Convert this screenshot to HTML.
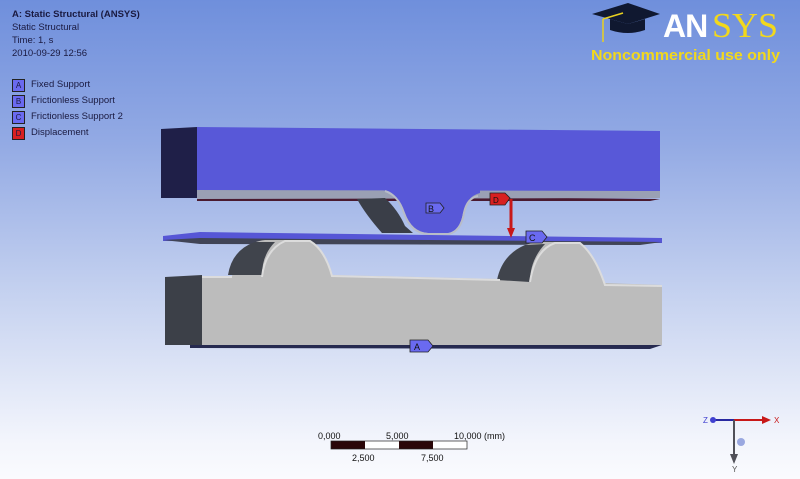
<!DOCTYPE html>
<html><head><meta charset="utf-8"><style>
html,body{margin:0;padding:0}
body{width:800px;height:479px;overflow:hidden;position:relative;font-family:"Liberation Sans",sans-serif;
background:linear-gradient(180deg,#6f8fdc 0%,#93aae4 30%,#c3d0ef 60%,#f3f5fc 92%,#fafbfe 100%);}
.t{position:absolute;left:12px;font-size:9.5px;color:#1a1a40;}
.lg{position:absolute;left:12px;font-size:9.5px;color:#1a1a40;height:12px;line-height:12px}
.lg b{display:inline-block;width:11px;height:11px;border:1px solid #222;font-size:8px;text-align:center;line-height:11px;margin-right:6px;vertical-align:top;font-weight:normal}
</style></head><body>
<div class="t" style="top:9px;font-weight:bold">A: Static Structural (ANSYS)</div>
<div class="t" style="top:22px">Static Structural</div>
<div class="t" style="top:35px">Time: 1, s</div>
<div class="t" style="top:48px">2010-09-29 12:56</div>
<div class="lg" style="top:79px"><b style="background:#6a6af0">A</b>Fixed Support</div>
<div class="lg" style="top:95px"><b style="background:#6a6af0">B</b>Frictionless Support</div>
<div class="lg" style="top:111px"><b style="background:#6a6af0">C</b>Frictionless Support 2</div>
<div class="lg" style="top:127px"><b style="background:#d82020">D</b>Displacement</div>

<svg width="800" height="479" style="position:absolute;left:0;top:0" xmlns="http://www.w3.org/2000/svg">
<!-- logo -->
<path d="M592 14 L628 3 L660 14 L628 24 Z" fill="#101830"/>
<path d="M610 19 L610 30 Q628 36 645 30 L645 19 L628 24 Z" fill="#101830"/>
<line x1="603" y1="19" x2="623" y2="13" stroke="#e8d020" stroke-width="1.5"/>
<line x1="603" y1="19" x2="603" y2="42" stroke="#e8d020" stroke-width="1.5"/>
<text x="663" y="37" font-family="Liberation Sans" font-weight="bold" font-size="32" fill="#fff" letter-spacing="-1">AN</text>
<text x="712" y="37" font-family="Liberation Serif" font-size="35" fill="#f2d81c" textLength="66" lengthAdjust="spacingAndGlyphs">SYS</text>
<text x="591" y="60" font-family="Liberation Sans" font-weight="bold" font-size="15" fill="#f2d81c" textLength="189" lengthAdjust="spacingAndGlyphs">Noncommercial use only</text>

<!-- upper block -->
<path d="M161 129 L197 127 L197 198 L161 198 Z" fill="#1f1f48"/>
<path d="M197 198 L380 196 L470 197 L660 199 L650 201 L197 201 Z" fill="#4a1a30"/>
<path d="M197 188 L660 190 L660 198 L197 199 Z" fill="#9aa0b4"/>
<path d="M197 127 L660 131 L660 191 L197 190 Z" fill="#5858d8"/>
<path d="M357 199 L385 198 Q398 210 405 226 L413 233 L382 233 Q366 215 357 199 Z" fill="#3a3e48"/>
<path d="M383 190 Q397 193 403 212 Q410 232 428 233 L448 233 Q460 231 463 213 Q467 196 480 193 L480 189 L383 189 Z" fill="#5858d8"/>
<path d="M385 191 Q398 195 404 213 Q411 233 428 234 L449 234 Q461 231 464 213 Q467 198 478 196" stroke="#b8bcc8" stroke-width="2" fill="none"/>
<!-- plate -->
<path d="M163 236 L200 232 L662 238 L662 243 L163 241 Z" fill="#5656d6"/>
<path d="M163 240 L200 238 L662 242 L640 245 L200 244 Z" fill="#404456"/>
<!-- lower block -->
<path d="M165 277 L202 275 L202 345 L165 345 Z" fill="#3c4048"/>
<path d="M202 276 L232 276 L235 262 Q245 242 265 240 L310 240 Q325 250 332 275 L500 279 L505 262 Q515 244 540 242 L580 242 Q595 255 605 283 L662 285 L662 345 L202 345 Z" fill="#bcbcbc"/>
<path d="M228 275 Q232 250 255 242 L275 242 Q262 255 262 275 Z" fill="#40444c"/>
<path d="M497 280 Q502 255 525 245 L545 244 Q530 260 530 282 Z" fill="#40444c"/>
<path d="M202 277 L232 277 M262 277 Q265 250 285 241 L310 241 Q325 250 332 276 L500 280 M530 282 Q535 250 555 243 L580 243 Q595 255 605 285 L662 286" stroke="#dcdcdc" stroke-width="2" fill="none"/>
<path d="M190 345 L662 345 L650 349 L190 348 Z" fill="#262a50"/>
<!-- labels -->
<path d="M410 340 L428 340 L433 346 L428 352 L410 352 Z" fill="#6a6af0" stroke="#222" stroke-width="0.8"/>
<text x="414" y="350" font-size="9" font-family="Liberation Sans" fill="#111">A</text>
<path d="M426 203 L440 203 L444 208 L440 213 L426 213 Z" fill="#6a6af0" stroke="#222" stroke-width="0.8"/>
<text x="428" y="212" font-size="9" font-family="Liberation Sans" fill="#111">B</text>
<path d="M526 231 L542 231 L547 237 L542 243 L526 243 Z" fill="#6a6af0" stroke="#222" stroke-width="0.8"/>
<text x="529" y="241" font-size="9" font-family="Liberation Sans" fill="#111">C</text>
<path d="M490 193 L505 193 L510 198 L505 205 L490 205 Z" fill="#d82020" stroke="#222" stroke-width="0.8"/>
<text x="493" y="203" font-size="8" font-family="Liberation Sans" fill="#111">D</text>
<line x1="511" y1="199" x2="511" y2="230" stroke="#c81818" stroke-width="3"/>
<path d="M507 228 L515 228 L511 238 Z" fill="#c81818"/>

<!-- scale bar -->
<text x="318" y="439" font-size="9" font-family="Liberation Sans" fill="#111">0,000</text>
<text x="386" y="439" font-size="9" font-family="Liberation Sans" fill="#111">5,000</text>
<text x="454" y="439" font-size="9" font-family="Liberation Sans" fill="#111">10,000 (mm)</text>
<rect x="331" y="441" width="34" height="8" fill="#2a0608"/>
<rect x="365" y="441" width="34" height="8" fill="#fff"/>
<rect x="399" y="441" width="34" height="8" fill="#2a0608"/>
<rect x="433" y="441" width="34" height="8" fill="#fff"/>
<rect x="331" y="441" width="136" height="8" fill="none" stroke="#222" stroke-width="0.7"/>
<text x="352" y="461" font-size="9" font-family="Liberation Sans" fill="#111">2,500</text>
<text x="421" y="461" font-size="9" font-family="Liberation Sans" fill="#111">7,500</text>

<!-- triad -->
<line x1="734" y1="420" x2="765" y2="420" stroke="#c81818" stroke-width="2"/>
<path d="M762 416 L771 420 L762 424 Z" fill="#c81818"/>
<text x="774" y="423" font-size="8" font-family="Liberation Sans" fill="#c81818">X</text>
<line x1="734" y1="420" x2="713" y2="420" stroke="#2828a0" stroke-width="2"/>
<circle cx="713" cy="420" r="3" fill="#4040d0"/>
<text x="703" y="423" font-size="8" font-family="Liberation Sans" fill="#4040d0">Z</text>
<line x1="734" y1="420" x2="734" y2="458" stroke="#505058" stroke-width="2"/>
<path d="M730 454 L734 464 L738 454 Z" fill="#505058"/>
<text x="732" y="472" font-size="8" font-family="Liberation Sans" fill="#555">Y</text>
<circle cx="741" cy="442" r="4" fill="#9aa8e0"/>
</svg>
</body></html>
